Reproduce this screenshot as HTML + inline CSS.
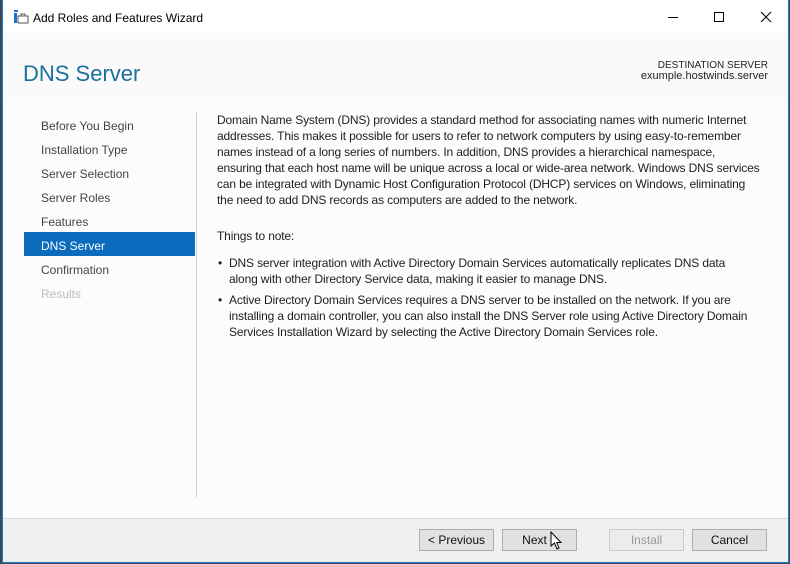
<!DOCTYPE html>
<html><head><meta charset="utf-8"><style>
*{margin:0;padding:0;box-sizing:border-box}
body{width:790px;height:564px;overflow:hidden;background:#3a4a5a;font-family:"Liberation Sans",sans-serif;position:relative;color:#1e1e1e}
.win{position:absolute;left:2px;top:0;width:787px;height:563px;background:#fcfcfc;border:1px solid #1979ca;border-top:none}
.title{position:absolute;left:0;top:0;width:100%;height:33px;background:#fff;font-size:12px}
.title .t{position:absolute;left:30px;top:11px;color:#000}
.hdr{position:absolute;left:0;top:33px;width:100%;height:70px;background:#fafafa}
.h1{position:absolute;left:20px;top:61px;font-size:22px;color:#1a6f9c;}
.dest{position:absolute;right:20px;top:60px;text-align:right;font-size:10px;color:#222;line-height:11px}
.dest b{font-weight:normal;font-size:11px}
.nav{position:absolute;left:38px;font-size:12px;color:#444}
.sel{position:absolute;left:21px;top:232px;width:171px;height:24px;background:#0b6cbd}
.div{position:absolute;left:193px;top:112px;width:1px;height:385px;background:#ccc}
.body{position:absolute;left:214px;top:112px;font-size:12px;line-height:16px;white-space:nowrap;letter-spacing:-0.15px;color:#1e1e1e}
.bl{padding-left:12px;position:absolute;left:214px}
.bl::before{content:"•";position:absolute;left:1px;top:0}
.foot{position:absolute;left:0;top:518px;width:100%;height:44px;background:#f0f0f0;border-top:1px solid #d9d9d9}
.btn{position:absolute;top:529px;height:22px;width:75px;border:1px solid #adadad;background:#e1e1e1;font-size:12px;text-align:center;line-height:20px;color:#111}
</style></head><body>
<div class="win">
<div class="title">
<svg style="position:absolute;left:10px;top:9px" width="16" height="16"><rect x="1" y="1" width="4" height="2" fill="#1a78c8"/><rect x="1" y="4" width="3" height="10" fill="#1a78c8"/><rect x="5" y="7" width="10" height="7" fill="none" stroke="#555" stroke-width="1"/><rect x="8" y="5" width="4" height="2" fill="none" stroke="#555"/></svg>
<span class="t">Add Roles and Features Wizard</span>
<svg style="position:absolute;left:665px;top:10px" width="110" height="14"><line x1="0" y1="7.5" x2="10" y2="7.5" stroke="#000"/><rect x="46.5" y="2.5" width="9" height="9" fill="none" stroke="#000"/><path d="M93 2L103 12M103 2L93 12" stroke="#000"/></svg>
</div>
<div class="hdr"></div>
<div class="h1">DNS Server</div>
<div class="dest">DESTINATION SERVER<br><b>exumple.hostwinds.server</b></div>
<div class="sel"></div>
<div class="nav" style="top:119px">Before You Begin</div>
<div class="nav" style="top:143px">Installation Type</div>
<div class="nav" style="top:167px">Server Selection</div>
<div class="nav" style="top:191px">Server Roles</div>
<div class="nav" style="top:215px">Features</div>
<div class="nav" style="top:239px;color:#fff">DNS Server</div>
<div class="nav" style="top:263px">Confirmation</div>
<div class="nav" style="top:287px;color:#bbb">Results</div>
<div class="div"></div>
<div class="body">Domain Name System (DNS) provides a standard method for associating names with numeric Internet<br>addresses. This makes it possible for users to refer to network computers by using easy-to-remember<br>names instead of a long series of numbers. In addition, DNS provides a hierarchical namespace,<br>ensuring that each host name will be unique across a local or wide-area network. Windows DNS services<br>can be integrated with Dynamic Host Configuration Protocol (DHCP) services on Windows, eliminating<br>the need to add DNS records as computers are added to the network.</div>
<div class="body" style="top:228px">Things to note:</div>
<div class="body bl" style="top:255px">DNS server integration with Active Directory Domain Services automatically replicates DNS data<br>along with other Directory Service data, making it easier to manage DNS.</div>
<div class="body bl" style="top:292px">Active Directory Domain Services requires a DNS server to be installed on the network. If you are<br>installing a domain controller, you can also install the DNS Server role using Active Directory Domain<br>Services Installation Wizard by selecting the Active Directory Domain Services role.</div>
<div class="foot"></div>
<div class="btn" style="left:416px">&lt; Previous</div>
<div class="btn" style="left:499px;padding-right:10px">Next</div>
<div class="btn" style="left:606px;color:#999;border-color:#ccc;background:#ececec">Install</div>
<div class="btn" style="left:689px">Cancel</div>
<svg style="position:absolute;left:547px;top:531px" width="14" height="22"><path d="M1 1L1 15L4.5 12L7 18L9 17L6.8 11.5L11 11.5Z" fill="#fff" stroke="#000"/></svg>
</div>
</body></html>
